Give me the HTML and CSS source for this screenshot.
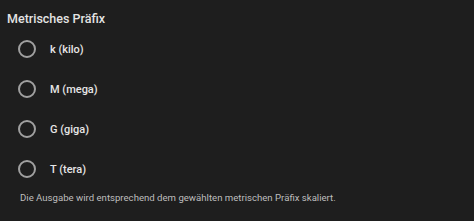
FILE: index.html
```html
<!DOCTYPE html>
<html lang="de">
<head>
<meta charset="utf-8">
<link rel="stylesheet" href="styles.css">
</head>
<body>
<div class="panel">
  <div class="title">Metrisches Präfix</div>
  <div class="options">
    <label class="option"><span class="radio"></span><span class="label">k (kilo)</span></label>
    <label class="option"><span class="radio"></span><span class="label">M (mega)</span></label>
    <label class="option"><span class="radio"></span><span class="label">G (giga)</span></label>
    <label class="option"><span class="radio"></span><span class="label">T (tera)</span></label>
  </div>
  <div class="helper">Die Ausgabe wird entsprechend dem gewählten metrischen Präfix skaliert.</div>
</div>
</body>
</html>
```
FILE: styles.css
```css
html, body {
  margin: 0;
  padding: 0;
  background: #1e1e1e;
}
.panel {
  width: 474px;
  height: 221px;
  box-sizing: border-box;
  padding: 11px 0 0 7px;
  font-family: Roboto, "Noto Sans", sans-serif;
  color: #e1e1e1;
}
.title {
  font-size: 12.5px;
  font-weight: 500;
  line-height: 16px;
  color: #e3e3e3;
}
.options {
  display: flex;
  flex-direction: column;
  margin-top: 2px;
}
.option {
  display: flex;
  align-items: center;
  height: 40px;
  padding-left: 11px;
}
.radio {
  width: 14px;
  height: 14px;
  border: 2px solid #a0a0a0;
  border-radius: 50%;
  flex: none;
}
.label {
  margin-left: 14px;
  font-size: 11px;
  font-weight: 500;
  color: #e6e6e6;
}
.helper {
  margin-top: 3px;
  padding-left: 13px;
  font-size: 9.6px;
  line-height: 12px;
  color: #bdbdbd;
}
```
